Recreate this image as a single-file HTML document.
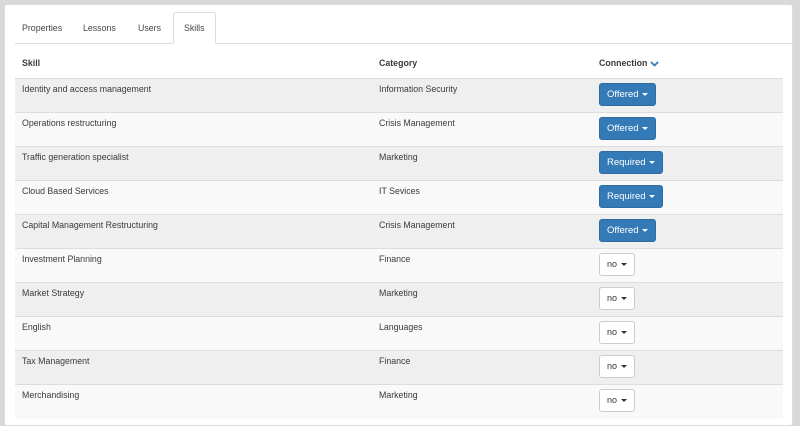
<!DOCTYPE html>
<html><head><style>
body{margin:0;width:800px;height:416px;background:#d9d9d9;font-family:"Liberation Sans",sans-serif;font-size:8.8px;color:#3a3a3a;overflow:hidden}
.panel{position:absolute;left:4px;top:4px;width:787px;height:420px;background:#fff;border:1px solid #ddd;border-radius:3px}
.tabs{position:absolute;left:10px;top:8px;width:778px;height:30px;border-bottom:1px solid #ddd}
.tab{position:absolute;top:0;height:30px;line-height:30px;color:#444;font-size:8.8px}
.tab.act{border:1px solid #ddd;border-bottom:1px solid #fff;border-radius:3px 3px 0 0;background:#fff;height:30px;padding:0 10px;top:-1px}
table{position:absolute;left:10px;top:44px;width:768px;border-collapse:collapse;table-layout:fixed}
td,th{text-align:left;vertical-align:top;padding:0 7px;box-sizing:border-box}
th{height:26px;line-height:29px;font-weight:bold;border-bottom:1px solid #ddd}
td{height:34px;border-top:1px solid #ddd;padding-top:5px}
tr.o td{background:#efefef}tr.e td{background:#f9f9f9}
.b{display:inline-block;height:21px;line-height:21px;border-radius:3px;padding:0 7px;font-size:9.5px;margin-top:-1px}
.p{background:#337ab7;color:#fff;border:1px solid #2e6da4}
.n{background:#fff;color:#333;border:1px solid #ccc;font-size:9px}
.c{display:inline-block;width:0;height:0;border-left:3px solid transparent;border-right:3px solid transparent;border-top:3px solid currentColor;vertical-align:middle;margin-left:1px}
</style></head><body>
<div class="panel">
<div class="tabs">
<span class="tab" style="left:7px">Properties</span>
<span class="tab" style="left:68px">Lessons</span>
<span class="tab" style="left:123px">Users</span>
<span class="tab act" style="left:158px">Skills</span>
</div>
<table>
<colgroup><col style="width:357px"><col style="width:220px"><col></colgroup>
<tr><th>Skill</th><th>Category</th><th>Connection <svg width="9" height="6" viewBox="0 0 9 6" style="vertical-align:middle"><path d="M1 1L4.5 4.5L8 1" stroke="#337ab7" stroke-width="1.8" fill="none"/></svg></th></tr>
<tr class="o"><td>Identity and access management</td><td>Information Security</td><td><span class="b p">Offered <i class="c"></i></span></td></tr>
<tr class="e"><td>Operations restructuring</td><td>Crisis Management</td><td><span class="b p">Offered <i class="c"></i></span></td></tr>
<tr class="o"><td>Traffic generation specialist</td><td>Marketing</td><td><span class="b p">Required <i class="c"></i></span></td></tr>
<tr class="e"><td>Cloud Based Services</td><td>IT Sevices</td><td><span class="b p">Required <i class="c"></i></span></td></tr>
<tr class="o"><td>Capital Management Restructuring</td><td>Crisis Management</td><td><span class="b p">Offered <i class="c"></i></span></td></tr>
<tr class="e"><td>Investment Planning</td><td>Finance</td><td><span class="b n">no <i class="c"></i></span></td></tr>
<tr class="o"><td>Market Strategy</td><td>Marketing</td><td><span class="b n">no <i class="c"></i></span></td></tr>
<tr class="e"><td>English</td><td>Languages</td><td><span class="b n">no <i class="c"></i></span></td></tr>
<tr class="o"><td>Tax Management</td><td>Finance</td><td><span class="b n">no <i class="c"></i></span></td></tr>
<tr class="e"><td>Merchandising</td><td>Marketing</td><td><span class="b n">no <i class="c"></i></span></td></tr>
</table>
</div>
</body></html>
